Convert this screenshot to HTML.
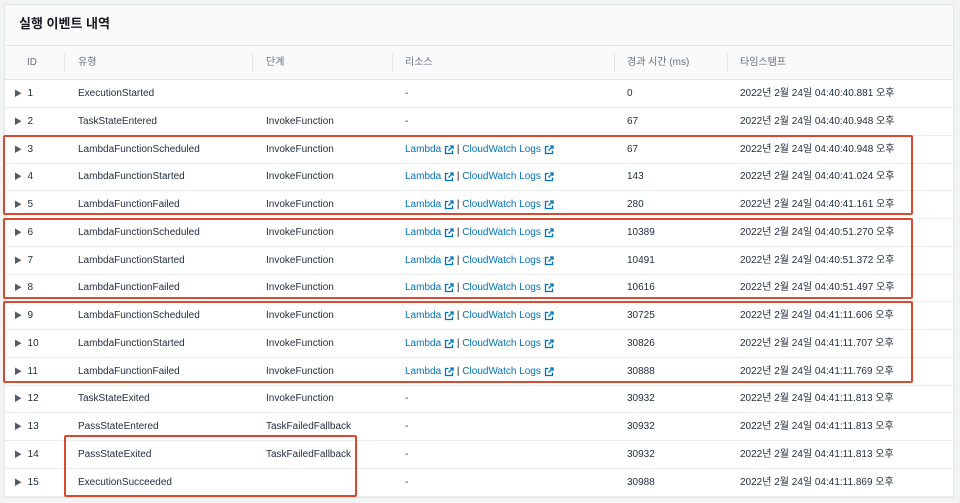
<!DOCTYPE html>
<html><head><meta charset="utf-8"><style>
body{margin:0;width:960px;height:503px;background:#f2f3f3;font-family:"Liberation Sans","Noto Sans CJK KR",sans-serif;overflow:hidden;position:relative}
.panel{position:absolute;left:4px;top:4px;width:948px;height:492px;background:#fff;border:1px solid #e4e6e6}
.title{position:absolute;left:0;top:0;width:948px;height:40px;background:#fafafa;border-bottom:1px solid #e4e6e6;font-size:13px;font-weight:bold;color:#16191f;line-height:38px;text-indent:14px}
.thead{position:absolute;left:0;top:41px;width:948px;height:33px;background:#fafafa;border-bottom:1px solid #e4e6e6;font-size:10px;color:#687078}
.thead span{position:absolute;top:11px;line-height:12px;height:12px}
.sep{position:absolute;top:7px;width:1px;height:19px;background:#e4e6e6}
.row{position:absolute;left:0;width:948px;height:27px;border-bottom:1px solid #eaeded;font-size:10px;color:#232f3e}
.row span{position:absolute;top:8px;white-space:nowrap;line-height:12px;height:12px}
.a{color:#0073bb}
.ext{display:inline-block;vertical-align:top;margin-left:3px;margin-top:1px}
.tri{font-size:8px;color:#545b64}
.box{position:absolute;border:2px solid #d9492f;border-radius:2px}
</style></head><body>
<div class="panel">
<div class="title">실행 이벤트 내역</div>
<div class="thead">
<span style="left:22px">ID</span><div class="sep" style="left:59px"></div>
<span style="left:73px">유형</span><div class="sep" style="left:247px"></div>
<span style="left:261px">단계</span><div class="sep" style="left:387px"></div>
<span style="left:400px">리소스</span><div class="sep" style="left:609px"></div>
<span style="left:622px">경과 시간 (ms)</span><div class="sep" style="left:722px"></div>
<span style="left:735px">타임스탬프</span>
</div>
<div id="rows"></div>
</div>
<div class="box" style="left:3px;top:135px;width:906px;height:76px"></div>
<div class="box" style="left:3px;top:218px;width:906px;height:77px"></div>
<div class="box" style="left:3px;top:301px;width:906px;height:78px"></div>
<div class="box" style="left:64px;top:435px;width:289px;height:58px"></div>
<script>
var d=[[1,"ExecutionStarted","",0,"0","04:40:40.881"],[2,"TaskStateEntered","InvokeFunction",0,"67","04:40:40.948"],
[3,"LambdaFunctionScheduled","InvokeFunction",1,"67","04:40:40.948"],[4,"LambdaFunctionStarted","InvokeFunction",1,"143","04:40:41.024"],
[5,"LambdaFunctionFailed","InvokeFunction",1,"280","04:40:41.161"],[6,"LambdaFunctionScheduled","InvokeFunction",1,"10389","04:40:51.270"],
[7,"LambdaFunctionStarted","InvokeFunction",1,"10491","04:40:51.372"],[8,"LambdaFunctionFailed","InvokeFunction",1,"10616","04:40:51.497"],
[9,"LambdaFunctionScheduled","InvokeFunction",1,"30725","04:41:11.606"],[10,"LambdaFunctionStarted","InvokeFunction",1,"30826","04:41:11.707"],
[11,"LambdaFunctionFailed","InvokeFunction",1,"30888","04:41:11.769"],[12,"TaskStateExited","InvokeFunction",0,"30932","04:41:11.813"],
[13,"PassStateEntered","TaskFailedFallback",0,"30932","04:41:11.813"],[14,"PassStateExited","TaskFailedFallback",0,"30932","04:41:11.813"],
[15,"ExecutionSucceeded","",0,"30988","04:41:11.869"]];
var ic='<svg class="ext" width="10" height="10" viewBox="0 0 10 10" fill="none" stroke="#0073bb" stroke-width="1.3"><path d="M4.5 1.5H1.5V8.5H8.5V5.5"/><path d="M6 1H9V4M9 1L4.5 5.5"/></svg>';
var h="";d.forEach(function(r,i){var t=75+i*27.75;
var res=r[3]?'<span class="a" style="left:400px">Lambda'+ic+' <b style="color:#16191f;font-weight:normal">|</b> CloudWatch Logs'+ic+'</span>':'<span style="left:400px">-</span>';
h+='<div class="row" style="top:'+t+'px"><span style="left:9px"><b class="tri">▶</b> &nbsp;'+r[0]+'</span><span style="left:73px">'+r[1]+'</span><span style="left:261px">'+r[2]+'</span>'+res+'<span style="left:622px">'+r[4]+'</span><span style="left:735px">2022년 2월 24일 '+r[5]+' 오후</span></div>';});
document.getElementById("rows").innerHTML=h;
</script>
</body></html>
